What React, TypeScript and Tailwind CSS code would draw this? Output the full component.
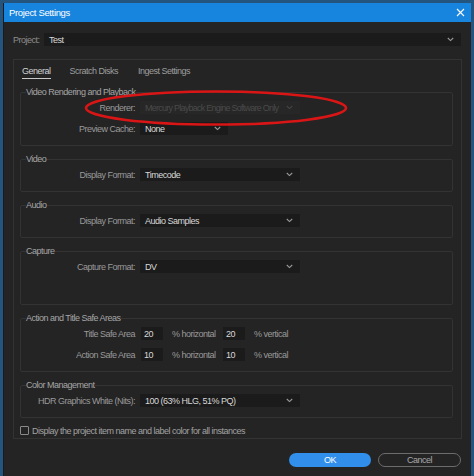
import React from "react";

function Chevron({ color = "#9a9a9a" }: { color?: string }) {
  return (
    <svg width="7" height="5" viewBox="0 0 7 5" className="shrink-0">
      <polyline points="0.8,1 3.5,3.6 6.2,1" fill="none" stroke={color} strokeWidth="1.1" />
    </svg>
  );
}

function Select({ value, w, disabled }: { value: string; w: string; disabled?: boolean }) {
  return (
    <div
      className={`h-[13px] ${w} flex items-center justify-between pl-[5px] pr-[7px] overflow-hidden ${
        disabled ? "bg-[#272727] text-[#4a4a4a]" : "bg-[#1b1b1b] text-[#d8d8d8]"
      }`}
    >
      <span className={`whitespace-nowrap ${disabled ? "tracking-[-0.75px]" : ""}`}>{value}</span>
      <Chevron color={disabled ? "#444444" : "#9a9a9a"} />
    </div>
  );
}

function Row({ label, children }: { label: string; children: React.ReactNode }) {
  return (
    <div className="flex items-center h-[13px]">
      <div className="w-[109px] text-right text-[#9a9a9a] whitespace-nowrap">{label}</div>
      <div className="ml-[5px] flex items-center">{children}</div>
    </div>
  );
}

function Group({
  title,
  children,
  first,
  pb = "pb-[10px]",
}: {
  title: string;
  children: React.ReactNode;
  first?: boolean;
  pb?: string;
}) {
  return (
    <fieldset
      className={`${first ? "" : "mt-[7px]"} w-[433px] border border-[#333333] rounded-[2px] px-[5px] pt-[3px] ${pb}`}
    >
      <legend className="text-[#a6a6a6] leading-[12px] whitespace-nowrap">{title}</legend>
      {children}
    </fieldset>
  );
}

function NumBox({ v }: { v: string }) {
  return (
    <div className="w-[22px] h-[13px] bg-[#1b1b1b] text-[#d8d8d8] pl-[3px] flex items-center">{v}</div>
  );
}

export default function App() {
  return (
    <div className="relative w-[474px] h-[476px] bg-[#24557f] pt-[3px] px-[3px] overflow-hidden font-['Liberation_Sans',Arial,sans-serif] text-[9px] tracking-[-0.5px] leading-[12px]">
      <div className="h-[473px] bg-[#242424] flex flex-col border-l border-[#1a1a1a]">
        {/* title bar */}
        <div className="h-[19px] bg-[#1784de] flex items-center justify-between pl-[5px] pr-[6px] shrink-0">
          <span className="text-white text-[9.5px] tracking-[-0.35px]">Project Settings</span>
          <svg width="9" height="9" viewBox="0 0 9 9">
            <path d="M1 1 L8 8 M8 1 L1 8" stroke="#ffffff" strokeWidth="1.1" />
          </svg>
        </div>

        {/* project row */}
        <div className="mt-[11px] flex items-center pl-[9px]">
          <span className="text-[#8e8e8e] w-[28px]">Project:</span>
          <div className="ml-[3px] w-[417px] h-[13px] bg-[#1b1b1b] flex items-center justify-between pl-[5px] pr-[7px] text-[#d8d8d8]">
            <span>Test</span>
            <Chevron />
          </div>
        </div>

        {/* tab panel */}
        <div className="mt-[13px] ml-[9px] w-[449px] border border-[#333333] flex flex-col pb-[3px]">
          <div className="flex pl-[8px] pt-[5px]">
            <div className="text-[#d2d2d2] border-b border-[#c8c8c8] pb-[1px]">General</div>
            <div className="ml-[19px] text-[#9e9e9e]">Scratch Disks</div>
            <div className="ml-[20px] text-[#9e9e9e]">Ingest Settings</div>
          </div>

          <div className="ml-[6px] mt-[7px] flex flex-col">
            <Group title="Video Rendering and Playback" first>
              <div className="flex flex-col gap-[8px]">
                <Row label="Renderer:">
                  <Select value="Mercury Playback Engine Software Only" w="w-[160px]" disabled />
                </Row>
                <Row label="Preview Cache:">
                  <Select value="None" w="w-[88px]" />
                </Row>
              </div>
            </Group>

            <Group title="Video">
              <Row label="Display Format:">
                <Select value="Timecode" w="w-[160px]" />
              </Row>
            </Group>

            <Group title="Audio">
              <Row label="Display Format:">
                <Select value="Audio Samples" w="w-[160px]" />
              </Row>
            </Group>

            <Group title="Capture" pb="pb-[31px]">
              <Row label="Capture Format:">
                <Select value="DV" w="w-[160px]" />
              </Row>
            </Group>

            <Group title="Action and Title Safe Areas">
              <div className="flex flex-col gap-[8px]">
                <Row label="Title Safe Area">
                  <div className="ml-[1px]">
                    <NumBox v="20" />
                  </div>
                  <span className="ml-[9px] text-[#9a9a9a] w-[42px] whitespace-nowrap">% horizontal</span>
                  <div className="ml-[9px]">
                    <NumBox v="20" />
                  </div>
                  <span className="ml-[9px] text-[#9a9a9a] whitespace-nowrap">% vertical</span>
                </Row>
                <Row label="Action Safe Area">
                  <div className="ml-[1px]">
                    <NumBox v="10" />
                  </div>
                  <span className="ml-[9px] text-[#9a9a9a] w-[42px] whitespace-nowrap">% horizontal</span>
                  <div className="ml-[9px]">
                    <NumBox v="10" />
                  </div>
                  <span className="ml-[9px] text-[#9a9a9a] whitespace-nowrap">% vertical</span>
                </Row>
              </div>
            </Group>

            <Group title="Color Management">
              <Row label="HDR Graphics White (Nits):">
                <Select value="100 (63% HLG, 51% PQ)" w="w-[160px]" />
              </Row>
            </Group>

            <div className="mt-[8px] flex items-center h-[9px]">
              <div className="w-[9px] h-[9px] border border-[#8a8a8a] rounded-[1px]" />
              <span className="ml-[3px] text-[#a2a2a2] whitespace-nowrap">
                Display the project item name and label color for all instances
              </span>
            </div>
          </div>
        </div>

        {/* buttons */}
        <div className="mt-[14px] flex justify-end pr-[10px] gap-[7px]">
          <div className="w-[82px] h-[14px] rounded-full bg-[#318eea] text-white flex items-center justify-center">
            OK
          </div>
          <div className="w-[83px] h-[14px] rounded-full border-[1.5px] border-[#6c6c6c] text-[#a8a8a8] flex items-center justify-center">
            Cancel
          </div>
        </div>
      </div>

      {/* red annotation ellipse */}
      <svg className="absolute left-0 top-0 pointer-events-none" width="474" height="476">
        <ellipse cx="216" cy="108" rx="130" ry="16.5" fill="none" stroke="#d91515" strokeWidth="2.6" />
      </svg>
    </div>
  );
}
